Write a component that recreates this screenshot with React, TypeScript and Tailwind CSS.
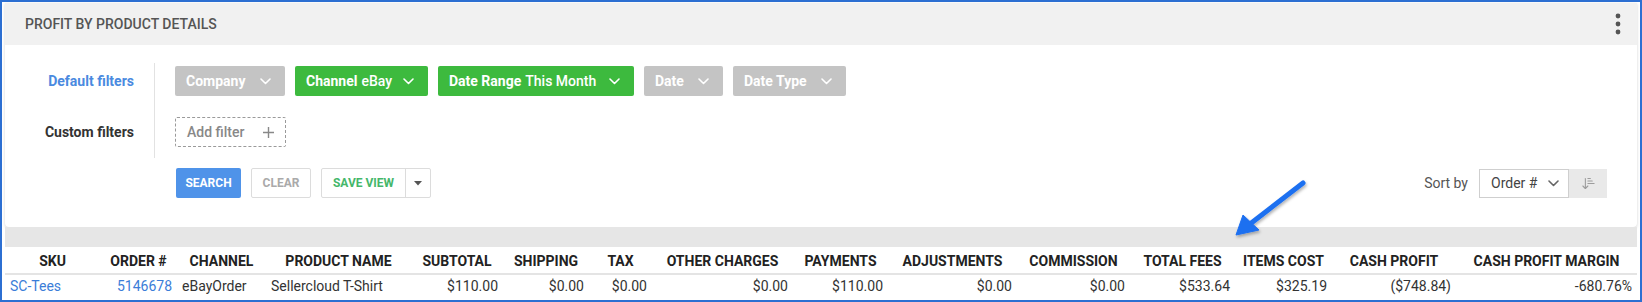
import React from 'react';
import { ArrowDownNarrowWide } from 'lucide-react';

const Chevron = ({ className = '' }: { className?: string }) => (
  <svg width="11" height="7" viewBox="0 0 11 7" className={className}>
    <polyline points="1,1 5.5,5.5 10,1" fill="none" stroke="currentColor" strokeWidth="1.6" strokeLinecap="round" strokeLinejoin="round" />
  </svg>
);

const FilterChip = ({ label, value, width, active }: { label: string; value?: string; width: string; active?: boolean }) => (
  <button
    className={`h-[30px] ${width} rounded-[2px] pl-[11px] pr-[14px] flex items-center text-white text-[14px] ${active ? 'bg-[#3dba3e]' : 'bg-[#c4c4c4]'}`}
  >
    <span className="font-bold">{label}</span>
    {value && <span className="font-medium ml-[4px]">{value}</span>}
    <Chevron className="ml-auto" />
  </button>
);

const columns: { title: string; width: number; align: 'left' | 'right' }[] = [
  { title: 'SKU', width: 95, align: 'left' },
  { title: 'ORDER #', width: 77, align: 'right' },
  { title: 'CHANNEL', width: 89, align: 'left' },
  { title: 'PRODUCT NAME', width: 145, align: 'left' },
  { title: 'SUBTOTAL', width: 92, align: 'right' },
  { title: 'SHIPPING', width: 86, align: 'right' },
  { title: 'TAX', width: 63, align: 'right' },
  { title: 'OTHER CHARGES', width: 141, align: 'right' },
  { title: 'PAYMENTS', width: 95, align: 'right' },
  { title: 'ADJUSTMENTS', width: 129, align: 'right' },
  { title: 'COMMISSION', width: 113, align: 'right' },
  { title: 'TOTAL FEES', width: 105, align: 'right' },
  { title: 'ITEMS COST', width: 97, align: 'right' },
  { title: 'CASH PROFIT', width: 124, align: 'right' },
  { title: 'CASH PROFIT MARGIN', width: 181, align: 'right' },
];

const row = [
  'SC-Tees', '5146678', 'eBayOrder', 'Sellercloud T-Shirt', '$110.00', '$0.00', '$0.00', '$0.00',
  '$110.00', '$0.00', '$0.00', '$533.64', '$325.19', '($748.84)', '-680.76%',
];

export default function App() {
  return (
    <div className="relative w-[1642px] h-[302px] border-2 border-[#2c6fd2] bg-white font-[Roboto,sans-serif] overflow-hidden">
      <div className="px-[3px] pt-[1px]">
        {/* Card */}
        <div className="bg-white rounded-b-[4px] shadow-[0_1px_3px_rgba(0,0,0,0.18)]">
          <div className="h-[42px] bg-[#f1f1f1] flex items-center justify-between pl-[20px] pr-[16px]">
            <span className="text-[14px] font-medium text-[#555]">PROFIT BY PRODUCT DETAILS</span>
            <svg width="6" height="22" viewBox="0 0 6 22" className="text-[#555]">
              <circle cx="3" cy="3" r="2.4" fill="currentColor" />
              <circle cx="3" cy="11" r="2.4" fill="currentColor" />
              <circle cx="3" cy="19" r="2.4" fill="currentColor" />
            </svg>
          </div>

          <div className="pt-[18px] pb-[29px]">
            <div className="flex">
              <div className="w-[150px] pr-[20px] border-r border-[#e2e2e2] pt-[3px] pb-[11px] flex flex-col gap-[21px] text-right text-[14px] font-bold">
                <div className="h-[30px] leading-[30px] text-[#4a8ae0]">Default filters</div>
                <div className="h-[30px] leading-[30px] text-[#333]">Custom filters</div>
              </div>
              <div className="pl-[20px] pt-[3px] flex flex-col gap-[21px]">
                <div className="flex gap-[10px]">
                  <FilterChip label="Company" width="w-[110px]" />
                  <FilterChip label="Channel" value="eBay" width="w-[133px]" active />
                  <FilterChip label="Date Range" value="This Month" width="w-[196px]" active />
                  <FilterChip label="Date" width="w-[79px]" />
                  <FilterChip label="Date Type" width="w-[113px]" />
                </div>
                <div>
                  <button className="h-[30px] w-[111px] border border-dashed border-[#9a9a9a] rounded-[2px] pl-[11px] pr-[10px] flex items-center text-[14px] font-medium text-[#888]">
                    Add filter
                    <svg width="13" height="13" viewBox="0 0 13 13" className="ml-auto">
                      <path d="M6.5 1v11M1 6.5h11" stroke="currentColor" strokeWidth="1.4" />
                    </svg>
                  </button>
                </div>
              </div>
            </div>

            <div className="mt-[10px] pl-[171px] pr-[30px] flex items-center justify-between">
              <div className="flex items-center gap-[10px] text-[12px] font-bold">
                <button className="h-[30px] w-[65px] bg-[#4f93e9] text-white rounded-[2px]">SEARCH</button>
                <button className="h-[30px] w-[60px] border border-[#dcdcdc] text-[#aaa] rounded-[2px]">CLEAR</button>
                <div className="flex h-[30px] border border-[#dcdcdc] rounded-[2px]">
                  <button className="w-[83px] text-[#45b76a]">SAVE VIEW</button>
                  <button className="w-[25px] border-l border-[#dcdcdc] flex items-center justify-center">
                    <svg width="8" height="5" viewBox="0 0 8 5">
                      <path d="M0 0h8L4 4.5z" fill="#555" />
                    </svg>
                  </button>
                </div>
              </div>
              <div className="flex items-center">
                <span className="text-[14px] text-[#555] mr-[11px]">Sort by</span>
                <div className="h-[29px] w-[90px] border border-[#cfcfcf] pl-[11px] pr-[9px] flex items-center text-[14px] text-[#444]">
                  Order #
                  <Chevron className="ml-auto text-[#666]" />
                </div>
                <div className="h-[29px] w-[38px] bg-[#e9e9e9] flex items-center justify-center text-[#9c9c9c]">
                  <ArrowDownNarrowWide size={15} strokeWidth={1.7} />
                </div>
              </div>
            </div>
          </div>
        </div>

        {/* Gray band */}
        <div className="h-[20px] bg-[#e6e6e6]" />

        {/* Table */}
        <div className="grid grid-cols-[95px_77px_89px_145px_92px_86px_63px_141px_95px_129px_113px_105px_97px_124px_181px]">
          {columns.map((c) => (
            <div key={c.title} className="h-[28px] leading-[28px] text-center text-[14px] font-bold text-[#222] border-b-2 border-[#e4e4e4] whitespace-nowrap">
              {c.title}
            </div>
          ))}
          {row.map((v, i) => (
            <div
              key={i}
              className={`h-[23px] leading-[23px] px-[5px] text-[14px] whitespace-nowrap ${columns[i].align === 'right' ? 'text-right' : 'text-left'} ${i < 2 ? 'text-[#3b7dd8]' : 'text-[#333]'}`}
            >
              {v}
            </div>
          ))}
        </div>
      </div>

      {/* Annotation arrow */}
      <svg className="absolute left-0 top-0 pointer-events-none" width="1642" height="302">
        <defs>
          <filter id="sh" x="-20%" y="-20%" width="140%" height="140%">
            <feDropShadow dx="1" dy="2" stdDeviation="1.5" floodColor="#000" floodOpacity="0.3" />
          </filter>
        </defs>
        <g filter="url(#sh)" fill="#1d6ff0" stroke="#1d6ff0">
          <line x1="1301" y1="181" x2="1248" y2="222" strokeWidth="5" strokeLinecap="round" />
          <polygon points="1234,233 1241,213 1257,228" strokeWidth="1" strokeLinejoin="round" />
        </g>
      </svg>
    </div>
  );
}
